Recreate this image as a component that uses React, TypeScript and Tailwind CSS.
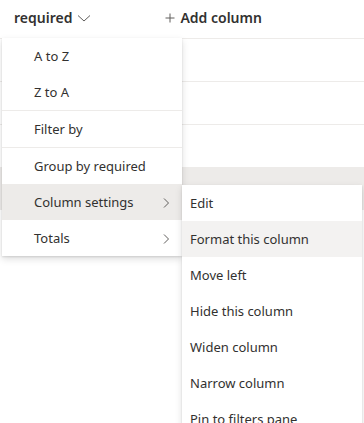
import React from "react";

const font = { fontFamily: '"Segoe UI", "Noto Sans", "Open Sans", sans-serif' };

function ChevronRight() {
  return (
    <svg width="8" height="12" viewBox="0 0 8 12" className="text-[#605e5c]">
      <path d="M2 1.5 L6.5 6 L2 10.5" fill="none" stroke="currentColor" strokeWidth="1" />
    </svg>
  );
}

function MenuItem({ label, sub }: { label: string; sub?: boolean }) {
  return (
    <div className="flex h-[36px] items-center justify-between pr-[12px] pt-[2px]">
      <span>{label}</span>
      {sub && <ChevronRight />}
    </div>
  );
}

export default function App() {
  return (
    <div className="relative h-[423px] w-[364px] overflow-hidden bg-white text-[14px] text-[#323130]" style={font}>
      {/* header */}
      <div className="flex h-[39px] items-center border-b border-[#edebe9] pb-[3px] pl-[14px]">
        <span className="font-semibold">required</span>
        <svg width="14" height="10" viewBox="0 0 14 10" className="ml-[5px] mt-[1px] text-[#605e5c]">
          <path d="M1 2.5 L7 8 L13 2.5" fill="none" stroke="currentColor" strokeWidth="1" />
        </svg>
        <span className="ml-[74px] flex items-center">
          <svg width="10" height="10" viewBox="0 0 10 10" className="mr-[5px] text-[#605e5c]">
            <path d="M5 0.5 V9.5 M0.5 5 H9.5" fill="none" stroke="currentColor" strokeWidth="1" />
          </svg>
          <span className="font-semibold">Add column</span>
        </span>
      </div>
      <div className="h-[43px] border-b border-[#edebe9]" />
      <div className="h-[43px] border-b border-[#edebe9]" />
      <div className="h-[42px]" />
      <div className="h-[43px] bg-[#edebe9]" />

      {/* main menu */}
      <div className="absolute left-[2px] top-[38px] w-[180px] bg-white text-[13px] shadow-[0_3.2px_7.2px_rgba(0,0,0,0.132),0_0.6px_1.8px_rgba(0,0,0,0.108)]">
        <div className="pl-[32px]">
          <MenuItem label="A to Z" />
        </div>
        <div className="pl-[32px]">
          <MenuItem label="Z to A" />
        </div>
        <div className="h-px bg-[#edebe9]" />
        <div className="pl-[32px]">
          <MenuItem label="Filter by" />
        </div>
        <div className="h-px bg-[#edebe9]" />
        <div className="pl-[32px]">
          <MenuItem label="Group by required" />
        </div>
        <div className="bg-[#edebe9] pl-[32px]">
          <MenuItem label="Column settings" sub />
        </div>
        <div className="pl-[32px]">
          <MenuItem label="Totals" sub />
        </div>
      </div>

      {/* submenu */}
      <div className="absolute left-[182px] top-[185px] w-[180px] bg-white text-[13px] shadow-[0_3.2px_7.2px_rgba(0,0,0,0.132),0_0.6px_1.8px_rgba(0,0,0,0.108)]">
        {["Edit", "Format this column", "Move left", "Hide this column", "Widen column", "Narrow column", "Pin to filters pane"].map(
          (l) => (
            <div
              key={l}
              className={"flex h-[36px] items-center pl-[8px] pt-[2px] " + (l === "Format this column" ? "bg-[#f3f2f1]" : "")}
            >
              {l}
            </div>
          )
        )}
      </div>
    </div>
  );
}
